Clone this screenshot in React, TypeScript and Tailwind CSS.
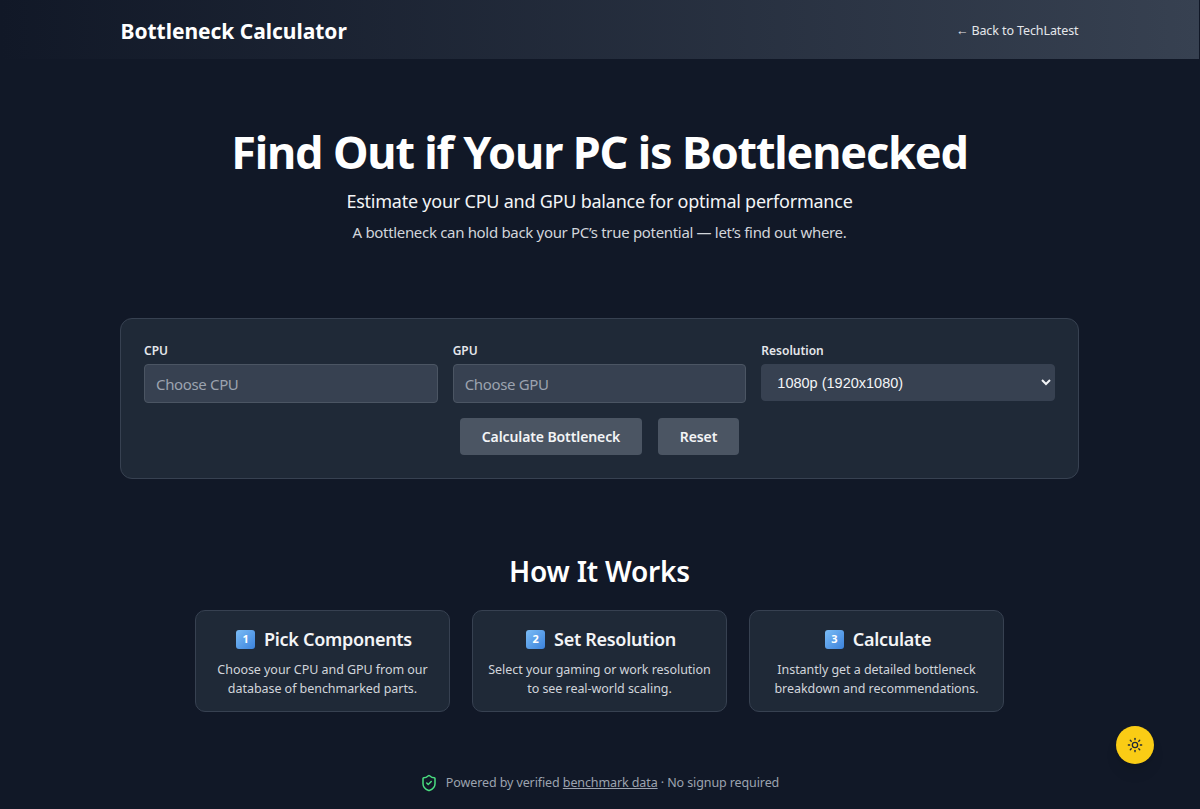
import { Sun } from "lucide-react";

function Keycap({ n }: { n: string }) {
  return (
    <span className="flex h-[19px] w-[19px] items-center justify-center rounded-[3px] bg-gradient-to-br from-[#7bbcf5] to-[#3b82dc] text-[11px] font-bold text-white">
      {n}
    </span>
  );
}

function Step({ n, title, lines }: { n: string; title: string; lines: string[] }) {
  return (
    <div className="flex h-[102px] w-[255px] flex-col items-center rounded-[10px] border border-[#374151] bg-[#1f2937] pt-[15px]">
      <div className="flex h-[26px] items-center gap-[9px] pl-[3px]">
        <Keycap n={n} />
        <h3 className="text-[18px] font-semibold tracking-[-0.3px] text-[#f3f4f6]">{title}</h3>
      </div>
      <p className="mt-[8px] text-center text-[12.5px] leading-[19px] tracking-[-0.05px] text-[#d1d5db]">
        {lines[0]}
        <br />
        {lines[1]}
      </p>
    </div>
  );
}

function Field({ label, children }: { label: string; children: React.ReactNode }) {
  return (
    <div className="flex flex-col">
      <label className="mb-[4px] h-[19px] text-[12px] leading-[19px] font-semibold text-[#e5e7eb]">{label}</label>
      {children}
    </div>
  );
}

export default function App() {
  return (
    <div className="h-[809px] bg-[#111827]">
      <div className="relative flex h-[809px] w-[1199px] flex-col overflow-hidden bg-[#111827] font-['Noto_Sans','Open_Sans',sans-serif] text-white">
        <header className="h-[59px] bg-gradient-to-r from-[#111827] to-[#374151] pt-[4px]">
          <div className="mx-auto flex h-full w-[960px] items-center justify-between pr-px pl-px">
            <div className="text-[21px] font-bold tracking-[-0.03px] text-white">Bottleneck Calculator</div>
            <a className="text-[12.5px] tracking-[-0.1px] text-[#e5e7eb]">← Back to TechLatest</a>
          </div>
        </header>

        <section className="mt-[61px] flex flex-col items-center">
          <h1 className="text-[45px] leading-[64px] font-bold tracking-[-1.17px] text-white">
            Find Out if Your PC is Bottlenecked
          </h1>
          <p className="mt-[3px] text-[18px] leading-[28px] tracking-[-0.23px] text-[#f3f4f6]">
            Estimate your CPU and GPU balance for optimal performance
          </p>
          <p className="mt-[6px] text-[15px] leading-[22px] tracking-[-0.32px] text-[#d1d5db]">
            A bottleneck can hold back your PC’s true potential — let’s find out where.
          </p>
        </section>

        <section className="mx-auto mt-[75px] h-[161px] w-[959px] rounded-[12px] border border-[#374151] bg-[#1f2937] px-[23px] pt-[22px]">
          <div className="grid grid-cols-3 gap-[15px]">
            <Field label="CPU">
              <input
                placeholder="Choose CPU"
                className="h-[39px] rounded-[4px] border border-[#4b5563] bg-[#374151] px-[11px] text-[15px] tracking-[-0.35px] text-white placeholder:text-[#9ca3af]"
              />
            </Field>
            <Field label="GPU">
              <input
                placeholder="Choose GPU"
                className="h-[39px] rounded-[4px] border border-[#4b5563] bg-[#374151] px-[11px] text-[15px] tracking-[-0.35px] text-white placeholder:text-[#9ca3af]"
              />
            </Field>
            <Field label="Resolution">
              <select className="h-[37px] rounded-[4px] border border-[#374151] bg-[#374151] px-[11px] font-['Liberation_Sans',sans-serif] text-[14.5px] text-[#f3f4f6]">
                <option>1080p (1920x1080)</option>
              </select>
            </Field>
          </div>
          <div className="mt-[15px] flex justify-center gap-[16px]">
            <button className="h-[37px] w-[182px] rounded-[4px] bg-[#4b5563] text-[14px] font-semibold tracking-[-0.1px] text-[#f3f4f6]">
              Calculate Bottleneck
            </button>
            <button className="h-[37px] w-[81px] rounded-[4px] bg-[#4b5563] text-[14px] font-semibold tracking-[-0.1px] text-[#f3f4f6]">
              Reset
            </button>
          </div>
        </section>

        <section className="mt-[71px] flex flex-col items-center">
          <h2 className="text-[28px] leading-[42px] font-semibold tracking-[-0.2px] text-white">How It Works</h2>
          <div className="mt-[18px] flex gap-[22px]">
            <Step n="1" title="Pick Components" lines={["Choose your CPU and GPU from our", "database of benchmarked parts."]} />
            <Step n="2" title="Set Resolution" lines={["Select your gaming or work resolution", "to see real-world scaling."]} />
            <Step n="3" title="Calculate" lines={["Instantly get a detailed bottleneck", "breakdown and recommendations."]} />
          </div>
        </section>

        <footer className="mt-[62px] flex items-center justify-center gap-[8px] text-[12.5px] tracking-[-0.1px] text-[#9ca3af]">
          <svg width="18" height="18" viewBox="0 0 24 24" fill="none" stroke="#4ade80" strokeWidth="2" strokeLinecap="round" strokeLinejoin="round">
            <path d="M20 13c0 5-3.5 7.5-7.66 8.95a1 1 0 0 1-.67-.01C7.5 20.5 4 18 4 13V6a1 1 0 0 1 1-1c2 0 4.5-1.2 6.24-2.72a1.17 1.17 0 0 1 1.52 0C14.51 3.81 17 5 19 5a1 1 0 0 1 1 1z" />
            <path d="m9 12 2 2 4-4" />
          </svg>
          <span>
            Powered by verified <a className="underline">benchmark data</a> · No signup required
          </span>
        </footer>

        <button className="absolute top-[726px] left-[1116px] flex h-[38px] w-[38px] items-center justify-center rounded-full bg-[#facc15] text-[#1f2937] shadow-lg">
          <Sun size={16} strokeWidth={2} />
        </button>
      </div>
    </div>
  );
}
